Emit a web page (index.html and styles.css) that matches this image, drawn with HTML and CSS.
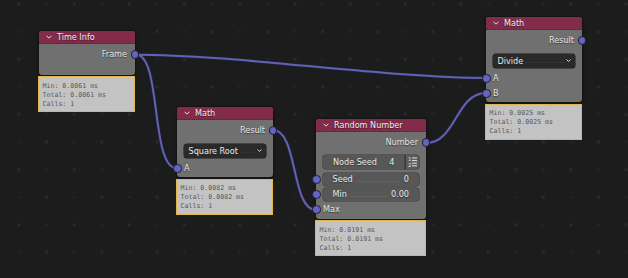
FILE: index.html
```html
<!DOCTYPE html>
<html lang="en">
<head>
    <meta charset="UTF-8">
    <meta name="viewport" content="width=device-width, initial-scale=1.0">
    <title>Node Editor</title>
    <link rel="stylesheet" href="styles.css">
</head>
<body>
    <div class="canvas">
        <svg class="backdrop" width="628" height="278" viewBox="0 0 628 278">
            <defs>
                <pattern id="grid" width="55.2" height="55.2" patternUnits="userSpaceOnUse">
                    <rect x="17.6" y="2.6" width="2.8" height="2.8" fill="#2b2b2b"/>
                    <rect x="45.2" y="30.2" width="2.8" height="2.8" fill="#2b2b2b"/>
                    <path d="M45.4 2.8l2.4 2.4M47.8 2.8l-2.4 2.4M17.8 30.4l2.4 2.4M20.2 30.4l-2.4 2.4" stroke="#2a2a2a" stroke-width="0.8"/>
                </pattern>
            </defs>
            <rect width="628" height="278" fill="#1c1c1c"/>
            <rect width="628" height="278" fill="url(#grid)"/>
            <!-- links -->
            <g fill="none" stroke="#23233f" stroke-width="3.4" stroke-opacity="0.7">
                <path d="M136 54.7C236 54.7 386 78 486 78"/>
                <path d="M136 54.7C162 54.7 150 168.3 177 168.3"/>
                <path d="M273 130C298 130 291 210 316 210"/>
                <path d="M426 143C456 143 456 93 486 93"/>
            </g>
            <g fill="none" stroke="#6262b2" stroke-width="2">
                <path d="M136 54.7C236 54.7 386 78 486 78"/>
                <path d="M136 54.7C162 54.7 150 168.3 177 168.3"/>
                <path d="M273 130C298 130 291 210 316 210"/>
                <path d="M426 143C456 143 456 93 486 93"/>
            </g>
        </svg>

        <div class="node time-info">
            <div class="card">
                <div class="head"><svg class="chev" width="6" height="4" viewBox="0 0 6 4"><polyline points="0.5,0.7 3,3.2 5.5,0.7"/></svg>Time Info</div>
                <div class="body">
                    <div class="row out">Frame<span class="sock"></span></div>
                </div>
            </div>
            <div class="stats">Min: 0.0061 ms<br>Total: 0.0061 ms<br>Calls: 1</div>
        </div>

        <div class="node math-sqrt">
            <div class="card">
                <div class="head"><svg class="chev" width="6" height="4" viewBox="0 0 6 4"><polyline points="0.5,0.7 3,3.2 5.5,0.7"/></svg>Math</div>
                <div class="body">
                    <div class="row out">Result<span class="sock"></span></div>
                    <div class="menu"><span>Square Root</span><i class="dots"></i><svg class="chev small" width="5" height="3" viewBox="0 0 5 3"><polyline points="0.5,0.5 2.5,2.5 4.5,0.5"/></svg></div>
                    <div class="row in"><span class="sock"></span>A</div>
                </div>
            </div>
            <div class="stats">Min: 0.0082 ms<br>Total: 0.0082 ms<br>Calls: 1</div>
        </div>

        <div class="node random">
            <div class="card">
                <div class="head"><svg class="chev" width="6" height="4" viewBox="0 0 6 4"><polyline points="0.5,0.7 3,3.2 5.5,0.7"/></svg>Random Number</div>
                <div class="body">
                    <div class="row out">Number<span class="sock"></span></div>
                    <div class="seed-line">
                        <div class="field joined"><span>Node Seed</span><span>4</span></div>
                        <div class="icon-btn">
                            <svg width="13" height="13" viewBox="0 0 13 13">
                                <text x="2" y="6" class="num">1</text>
                                <text x="2" y="11.6" class="num">2</text>
                                <path d="M6 3h5M6 5.6h5M6 8.2h5M6 10.8h5" stroke="#e4e4e4" stroke-width="1"/>
                            </svg>
                        </div>
                    </div>
                    <div class="row in slot"><span class="sock"></span><div class="field"><span>Seed</span><i class="dots"></i><span>0</span></div></div>
                    <div class="row in slot"><span class="sock"></span><div class="field"><span>Min</span><i class="dots"></i><span>0.00</span></div></div>
                    <div class="row in"><span class="sock"></span>Max</div>
                </div>
            </div>
            <div class="stats">Min: 0.0191 ms<br>Total: 0.0191 ms<br>Calls: 1</div>
        </div>

        <div class="node math-div">
            <div class="card">
                <div class="head"><svg class="chev" width="6" height="4" viewBox="0 0 6 4"><polyline points="0.5,0.7 3,3.2 5.5,0.7"/></svg>Math</div>
                <div class="body">
                    <div class="row out">Result<span class="sock"></span></div>
                    <div class="menu"><span>Divide</span><i class="dots"></i><svg class="chev small" width="5" height="3" viewBox="0 0 5 3"><polyline points="0.5,0.5 2.5,2.5 4.5,0.5"/></svg></div>
                    <div class="row in"><span class="sock"></span>A</div>
                    <div class="row in"><span class="sock"></span>B</div>
                </div>
            </div>
            <div class="stats">Min: 0.0025 ms<br>Total: 0.0025 ms<br>Calls: 1</div>
        </div>
    </div>
</body>
</html>
```

FILE: styles.css
```css
body { margin: 0; background: #1c1c1c; font-family: "DejaVu Sans Condensed", "Liberation Sans", sans-serif; font-size: 9px; color: #e6e6e6; }
.canvas { position: relative; width: 628px; height: 278px; overflow: hidden; }
.backdrop { position: absolute; left: 0; top: 0; }

/* nodes sit on a free canvas */
.node { position: absolute; width: 96px; display: flex; flex-direction: column; }
.time-info { left: 39px; top: 31px; }
.math-sqrt { left: 177px; top: 107px; }
.random { left: 316px; top: 119px; width: 110px; }
.math-div { left: 486px; top: 17px; }

.card { background: #707070; border-radius: 3px; box-shadow: 0 0 0 1px #141414, 0 2px 5px rgba(0,0,0,0.45); }
.head { height: 13px; display: flex; align-items: center; gap: 5px; padding-left: 7px; background: #822b4a; border-radius: 3px 3px 0 0; color: #ececec; text-shadow: 0 1px 1px rgba(0,0,0,0.45); border-bottom: 1px dotted rgba(0,0,0,0.3); box-sizing: border-box; }
.chev polyline { fill: none; stroke: #e2e2e2; stroke-width: 1; }
.chev.small polyline { stroke: #d8d8d8; }
.body { display: flex; flex-direction: column; padding: 2.5px 0 2px; }
.time-info .body { min-height: 31px; box-sizing: border-box; }

.row { position: relative; height: 15px; display: flex; align-items: center; padding: 0 8px 0 7px; text-shadow: 0 1px 1px rgba(0,0,0,0.5); }
.row.out { justify-content: flex-end; }
.row.slot { padding: 0; }
.sock { position: absolute; top: 50%; width: 6.5px; height: 6.5px; margin-top: -3.75px; border-radius: 50%; background: #6464c6; border: 0.5px solid #1e1e2e; }
.out .sock { right: -4px; }
.in .sock { left: -4px; }

.menu { height: 13.4px; margin: 6.8px 7px 2.8px 6.5px; padding: 0 4px 0 5px; display: flex; align-items: center; gap: 3px; background: #2a2a2a; border-radius: 3px; box-shadow: 0 0 0 0.5px #1a1a1a; color: #e8e8e8; }
.dots { flex: 1; height: 0; margin-top: 4px; border-bottom: 1px dotted rgba(255,255,255,0.08); }

.seed-line { display: flex; height: 13.4px; margin: 5.8px 7px 3px 6.5px; }
.field { flex: 1; height: 13px; margin: 0 7px 0 6.5px; padding: 0 10px; display: flex; align-items: center; gap: 4px; background: #575757; border-radius: 3.5px; box-shadow: 0 0 0 0.6px #3b3b3b; color: #eaeaea; text-shadow: 0 1px 1px rgba(0,0,0,0.4); }
.field .dots { border-bottom-color: rgba(255,255,255,0.12); }
.field.joined { height: 13.4px; margin: 0; justify-content: space-between; padding: 0 10px 0 10.5px; border-radius: 3.5px 0 0 3.5px; }
.icon-btn { width: 13.5px; height: 13.4px; background: #5c5c5c; border-left: 1px solid #3a3a3a; border-radius: 0 3.5px 3.5px 0; box-shadow: 0 0 0 0.6px #3b3b3b; display: flex; align-items: center; justify-content: center; }
.icon-btn .num { font: 5.5px "DejaVu Sans", sans-serif; fill: #e4e4e4; }

.stats { margin: 1.4px 0 0 -1.5px; padding: 4.5px 4px 2.5px; background: #c3c3c3; border: 1px solid #e2b54b; font-family: "DejaVu Sans Mono", "Liberation Mono", monospace; font-size: 6.6px; line-height: 9px; color: #585858; white-space: nowrap; }
```
